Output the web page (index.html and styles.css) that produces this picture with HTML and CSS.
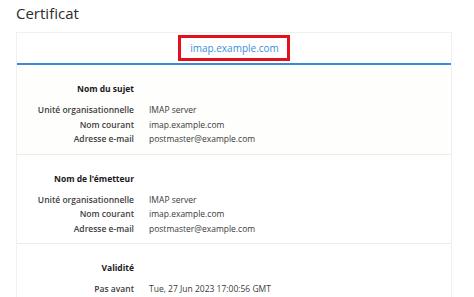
FILE: index.html
```html
<!DOCTYPE html>
<html lang="fr">
<head>
  <meta charset="UTF-8">
  <title>Certificat</title>
  <link rel="stylesheet" href="styles.css">
</head>
<body>
  <h1 class="page-title">Certificat</h1>
  <div class="card">
    <div class="tabs">
      <span class="tab">imap.example.com</span>
    </div>

    <div class="section section-first">
      <div class="row row-head"><span class="label">Nom du sujet</span><span></span></div>
      <div class="row"><span class="label">Unité organisationnelle</span><span class="value">IMAP server</span></div>
      <div class="row"><span class="label">Nom courant</span><span class="value">imap.example.com</span></div>
      <div class="row"><span class="label">Adresse e-mail</span><span class="value">postmaster@example.com</span></div>
    </div>

    <div class="section">
      <div class="row row-head"><span class="label">Nom de l’émetteur</span><span></span></div>
      <div class="row"><span class="label">Unité organisationnelle</span><span class="value">IMAP server</span></div>
      <div class="row"><span class="label">Nom courant</span><span class="value">imap.example.com</span></div>
      <div class="row"><span class="label">Adresse e-mail</span><span class="value">postmaster@example.com</span></div>
    </div>

    <div class="section">
      <div class="row row-head"><span class="label">Validité</span><span></span></div>
      <div class="row"><span class="label">Pas avant</span><span class="value">Tue, 27 Jun 2023 17:00:56 GMT</span></div>
    </div>
  </div>
</body>
</html>
```

FILE: styles.css
```css
html, body {
  margin: 0;
  padding: 0;
  background: #ffffff;
  overflow: hidden;
}

body {
  font-family: "Open Sans", "Noto Sans", sans-serif;
  color: #333;
  padding: 0 22px 0 16px;
}

.page-title {
  font-size: 15px;
  font-weight: 400;
  color: #2b2b2b;
  margin: 3px 0 9px 0;
  line-height: 20px;
}

.card {
  border: 1px solid #f0f0f0;
  border-bottom: none;
}

.tabs {
  display: flex;
  justify-content: center;
  padding: 2px 0 2px 0;
  border-bottom: 2px solid #3a8ad6;
}

.tab {
  font-size: 10px;
  color: #3b8fd9;
  line-height: 18px;
  padding: 1px 8px 1px 9px;
  border: 3px solid #e3111b;
}

.section {
  padding: 17px 0 7px 0;
  border-bottom: 1px solid #ececec;
}

.section-first {
  background: #fefefc;
}

.row {
  display: grid;
  grid-template-columns: 117px 1fr;
  column-gap: 15px;
  font-size: 8.5px;
  line-height: 14.5px;
}

.row-head {
  margin-bottom: 6.5px;
}

.row-head .label {
  color: #1a1a1a;
  font-weight: 700;
}

.label {
  text-align: right;
  font-weight: 600;
  color: #404040;
}

.value {
  color: #3a3a3a;
}
```
